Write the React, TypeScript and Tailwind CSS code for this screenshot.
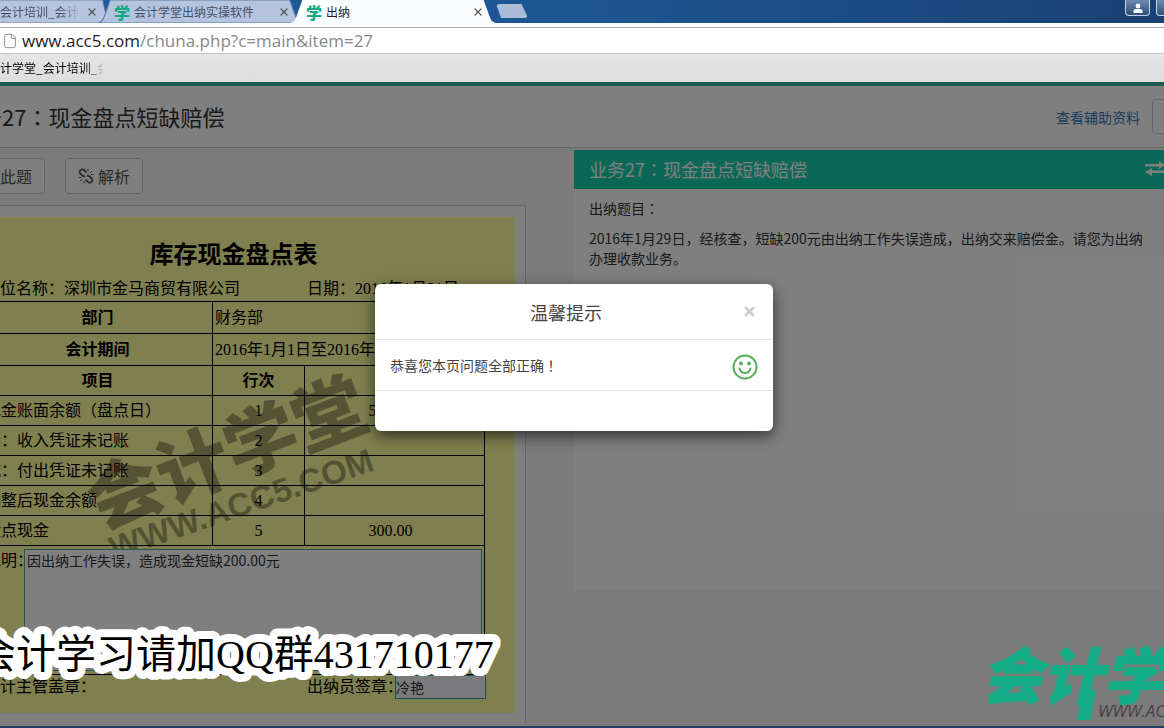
import { useState } from "react";
import { clsx } from "clsx";
import { X, File } from "lucide-react";

const tabs = [
  { id: "train", title: "会计培训_会计培", favicon: false, width: "w-[122px] -ml-3", pad: "pl-3" },
  { id: "soft", title: "会计学堂出纳实操软件", favicon: true, width: "w-[204px] -ml-3", pad: "pl-4" },
  { id: "cashier", title: "出纳", favicon: true, width: "w-[206px] -ml-3", pad: "pl-4" },
];

const rows = [
  { label: "现金账面余额（盘点日）", line: "1", amount: "500.00" },
  { label: "加：收入凭证未记账", line: "2", amount: "" },
  { label: "减：付出凭证未记账", line: "3", amount: "" },
  { label: "调整后现金余额", line: "4", amount: "" },
  { label: "盘点现金", line: "5", amount: "300.00" },
];

// colons and exclamation marks sit in the middle of their box
function Centered({ text }: { text: string }) {
  return (
    <>
      {text.split(/([：！])/).map((part, i) =>
        i % 2 ? (
          <span key={i} className="font-['Noto_Sans_CJK_TC',sans-serif]">{part}</span>
        ) : (
          part
        )
      )}
    </>
  );
}

function TabStrip() {
  const [active, setActive] = useState("cashier");

  return (
    <div className="flex h-[23px] items-start justify-between bg-linear-to-r from-[#1f5c9c] via-[#1d5592] to-[#1a4174]">
      <div className="flex min-w-0 items-start">
        {tabs.map((tab) => (
          <div key={tab.id} className={clsx("relative flex h-[23px] shrink-0 items-center", tab.width, active === tab.id && "z-10")}>
            <svg className="absolute inset-0 h-full w-full" viewBox="0 0 200 23" preserveAspectRatio="none">
              <path
                d="M0 23C4 22 5 20 6 17L12 0H188L194 17C195 20 196 22 200 23Z"
                fill={active === tab.id ? "#fbfcfd" : "#b4c4df"}
                stroke={active === tab.id ? "none" : "#5c7aa6"}
              />
            </svg>
            <button
              className={clsx("relative flex min-w-0 flex-1 items-center gap-1 text-xs", tab.pad, active === tab.id ? "text-[#222]" : "text-[#44506a]")}
              onClick={() => setActive(tab.id)}
            >
              {tab.favicon && <span className="text-base leading-none font-black text-[#12a884]">学</span>}
              <span
                className={clsx(
                  "overflow-hidden whitespace-nowrap",
                  !tab.favicon && "w-20 [mask-image:linear-gradient(to_right,black_75%,transparent)]"
                )}
              >
                {tab.title}
              </span>
            </button>
            <button className="relative mr-3 shrink-0 text-[#555]" aria-label="关闭标签页">
              <X size={12} strokeWidth={2.5} />
            </button>
          </div>
        ))}
        <button
          className="mt-1 h-[14px] w-8 rounded-sm bg-[#a9bdd9] [clip-path:polygon(0_0,80%_0,100%_100%,16%_100%)]"
          aria-label="新标签页"
        ></button>
      </div>
      <div className="-mr-4 flex gap-1.5">
        <button
          className="flex h-4 w-[25px] items-center justify-center rounded-b border border-t-0 border-[#c5d3e6] bg-linear-to-b from-[#6f8bb0] to-[#2f4f7c]"
          aria-label="用户"
        >
          <svg width="10" height="10" viewBox="0 0 10 10" fill="white">
            <circle cx="5" cy="3" r="2.4" />
            <path d="M0.5 10V8C0.5 6.5 2 6 3.5 6H6.5C8 6 9.5 6.5 9.5 8V10Z" />
          </svg>
        </button>
        <button
          className="h-4 w-6 rounded-b border border-t-0 border-[#c5d3e6] bg-linear-to-b from-[#6f8bb0] to-[#2f4f7c]"
          aria-label="最小化"
        ></button>
      </div>
    </div>
  );
}

function BrokenLinkIcon() {
  return (
    <svg width="16" height="16" viewBox="0 0 16 16" fill="none" stroke="currentColor" strokeWidth="1.8">
      <path d="M8.5 4.5L6.2 2.2C5 1 3.600 1 2.500 2.100C1.400 3.200 1.400 4.600 2.600 5.800L4.800 8L7 8.500" />
      <path d="M7.500 11.500L9.800 13.800C11 15 12.400 15 13.500 13.900C14.600 12.800 14.600 11.400 13.400 10.200L11.200 8L9 7.500" />
      <path d="M10 0.800V3M14 3L12 5M15.500 6.500H13M2 13L4 11M0.500 9.500H3M6 15.200V13" strokeWidth="1" />
    </svg>
  );
}

function CountSheet() {
  const [note, setNote] = useState("因出纳工作失误，造成现金短缺200.00元");
  const [sign, setSign] = useState("冷艳");

  return (
    <div className="relative overflow-hidden bg-[#ffff9f] pb-3.5 font-['Liberation_Serif','Noto_Sans_CJK_SC',serif] text-base text-black">
      <h3 className="-ml-12 pt-5 text-center text-2xl leading-9 font-bold">库存现金盘点表</h3>
      <div className="-ml-4 mt-1 flex h-6 items-center">
        <span className="w-[323px]">单位名称：深圳市金马商贸有限公司</span>
        <span>日期：2016年1月31日</span>
      </div>
      <svg
        className="absolute top-36 left-20"
        width="320"
        height="210"
        viewBox="80 361 320 210"
        fill="black"
        fillOpacity="0.34"
      >
        <text x="-36" y="27" transform="translate(124 492) rotate(-21)" fontFamily="Noto Sans CJK SC" fontSize="73" fontWeight="900">
          会计学堂
        </text>
        <text transform="translate(114 560) rotate(-19)" fontFamily="Liberation Sans" fontSize="33" fontWeight="700">
          WWW.ACC5.COM
        </text>
      </svg>
      <table className="relative -ml-[18px] w-[503px] table-fixed border-collapse">
        <colgroup>
          <col className="w-[230px]" />
          <col className="w-[92px]" />
          <col />
        </colgroup>
        <tbody className="[&_td]:border [&_td]:border-black [&_td]:px-0.5 [&_td]:py-0 [&_th]:border [&_th]:border-black [&_th]:p-0">
          <tr className="h-8">
            <th>部门</th>
            <td colSpan={2}>财务部</td>
          </tr>
          <tr className="h-8">
            <th>会计期间</th>
            <td colSpan={2}>2016年1月1日至2016年1月31日</td>
          </tr>
          <tr className="h-[30px]">
            <th>项目</th>
            <th>行次</th>
            <th>金额</th>
          </tr>
          {rows.map((row) => (
            <tr key={row.line} className="h-[30px]">
              <td>{row.label}</td>
              <td className="text-center">{row.line}</td>
              <td><div className="mr-2 text-center">{row.amount}</div></td>
            </tr>
          ))}
          <tr>
            <td colSpan={3}>
              <div className="flex items-start py-[3px]">
                <label htmlFor="note" className="w-[39px] shrink-0 whitespace-nowrap">说明：</label>
                <textarea
                  id="note"
                  className="block h-[122px] flex-1 resize-none border border-[#4caf8a] bg-white px-0.5 py-0 font-['Noto_Sans_CJK_SC',sans-serif] text-sm text-[#333]"
                  value={note}
                  onChange={(e) => setNote(e.target.value)}
                />
              </div>
            </td>
          </tr>
        </tbody>
      </table>
      <div className="-ml-4 flex items-center">
        <span className="w-[323px]">会计主管盖章：</span>
        <label htmlFor="sign" className="w-[88px] whitespace-nowrap">出纳员签章：</label>
        <input
          id="sign"
          className="relative h-6 w-[91px] border border-[#2fa7a0] bg-[#f4f4fa] font-['Noto_Sans_CJK_SC',sans-serif] text-sm text-[#333]"
          value={sign}
          onChange={(e) => setSign(e.target.value)}
        />
      </div>
    </div>
  );
}

function TipModal({ onClose }: { onClose: () => void }) {
  return (
    <div className="absolute inset-0 z-20 flex items-start justify-center bg-black/50 pt-[202px] pr-4">
      <div role="dialog" aria-labelledby="tip-title" className="w-[398px] rounded-md bg-white text-[#444] shadow-[0_5px_15px_rgba(0,0,0,0.6)]">
        <div className="relative flex h-14 items-center justify-center border-b border-[#e5e5e5]">
          <h4 id="tip-title" className="pr-4 text-lg">温馨提示</h4>
          <button className="absolute right-4 text-[#ccc]" onClick={onClose} aria-label="关闭">
            <X size={15} strokeWidth={4} />
          </button>
        </div>
        <div className="flex h-[51px] items-center justify-between border-b border-[#e5e5e5] px-[15px] text-sm">
          <p><Centered text="恭喜您本页问题全部正确！" /></p>
          <svg className="mt-1" width="26" height="26" viewBox="0 0 26 26" fill="none" stroke="#55ae5a" strokeWidth="2">
            <circle cx="13" cy="13" r="11.5" />
            <circle cx="9" cy="9.500" r="1.900" fill="#55ae5a" stroke="none" />
            <circle cx="17" cy="9.500" r="1.900" fill="#55ae5a" stroke="none" />
            <path d="M7.500 14.500C8.300 17.500 10.500 19 13 19S17.700 17.500 18.500 14.500" strokeLinecap="round" />
          </svg>
        </div>
        <div className="h-10"></div>
      </div>
    </div>
  );
}

export default function App() {
  const [showTip, setShowTip] = useState(true);

  return (
    <div className="relative flex min-h-screen flex-col overflow-hidden font-['Noto_Sans_CJK_SC',sans-serif] text-[#333]">
      <TabStrip />
      <div className="h-[5px] border-b border-[#a9a9a9] bg-[#fbfcfd]"></div>
      <div className="flex h-[26px] items-center gap-1 border-b border-[#c4c4c4] bg-white pl-0.5">
        <File size={16} strokeWidth={1.25} className="text-[#777]" />
        <div className="font-['Open_Sans',sans-serif] text-[17px] leading-6 text-[#888]">
          <span className="text-[#222]">www.acc5.com</span>/chuna.php?c=main&amp;item=27
        </div>
      </div>
      <div className="flex h-7 items-center bg-linear-to-b from-[#e6e4e4] to-[#dedede]">
        <a href="#" className="-ml-3 w-[116px] overflow-hidden text-xs whitespace-nowrap text-black [mask-image:linear-gradient(to_right,black_85%,transparent)]">
          会计学堂_会计培训_会计
        </a>
      </div>

      <main className="relative flex flex-1 flex-col border-b-2 border-[#1f3d66] bg-[#f7f7f7]">
        <header className="flex h-[66px] shrink-0 items-center justify-between border-t-4 border-b border-t-[#3cb89c] border-b-[#c8c8c8] bg-white">
          <h1 className="-ml-[42px] text-[22px] whitespace-nowrap"><Centered text="业务27：现金盘点短缺赔偿" /></h1>
          <div className="-mr-8 flex items-center gap-3">
            <a href="#" className="text-sm text-[#337ab7]">查看辅助资料</a>
            <button className="h-[35px] w-11 rounded border border-[#ccc] bg-white" aria-label="更多"></button>
          </div>
        </header>

        <div className="flex flex-1">
          <section className="w-[574px] shrink-0">
            <div className="-ml-12 flex h-[57px] items-center gap-5 pb-0.5 text-base text-[#555]">
              <button className="h-9 w-[93px] rounded-sm border border-[#ccc] bg-white pr-3 text-right">重做此题</button>
              <button className="flex h-9 w-[78px] items-center justify-center gap-1 rounded-sm border border-[#ccc] bg-white">
                <BrokenLinkIcon />
                解析
              </button>
            </div>
            <div className="w-[526px] border-t border-r border-[#ccc] bg-white pt-[11px] pr-2.5 pb-2.5">
              <CountSheet />
            </div>
          </section>

          <section className="mt-0.5 h-[440px] min-w-0 flex-1 bg-white">
            <div className="flex h-[39px] items-center justify-between bg-[#16d0ac] pb-0.5 pl-[15px]">
              <h2 className="text-lg text-white"><Centered text="业务27：现金盘点短缺赔偿" /></h2>
              <svg className="-mr-0.5" width="21" height="15" viewBox="0 0 21 15" fill="white">
                <path d="M0 3H14V0L20 4L14 8V5.500H0Z" />
                <path d="M21 9.500H7V7L0 11L7 15V12H21Z" />
              </svg>
            </div>
            <div className="px-[15px] pt-[9px] text-sm">
              <p className="mb-2.5"><Centered text="出纳题目：" /></p>
              <p>
                2016年1月29日，经核查，短缺200元由出纳工作失误造成，出纳交来赔偿金。请您为出纳办理收款业务。
              </p>
            </div>
          </section>
        </div>

        {showTip && <TipModal onClose={() => setShowTip(false)} />}
      </main>

      {/* scrolling caption and channel logo sit over everything */}
      <svg className="pointer-events-none absolute bottom-8 left-0 z-30" width="520" height="80" viewBox="0 0 520 80">
        <text
          x="-24"
          y="52"
          fontFamily="Liberation Serif, Noto Sans CJK SC, serif"
          fontSize="40"
          stroke="white"
          strokeWidth="16"
          strokeLinejoin="round"
          paintOrder="stroke"
        >
          会计学习请加QQ群431710177
        </text>
      </svg>
      <svg className="pointer-events-none absolute right-0 bottom-0.5 z-30" width="184" height="84" viewBox="0 0 184 84">
        <text x="1" y="57" fontFamily="Noto Sans CJK SC" fontSize="61" fontWeight="900" fontStyle="italic" fill="#14ac86" stroke="#14ac86" strokeWidth="1">
          会计学堂
        </text>
        <path d="M103 48H116L110 78H97Z" fill="#14ac86" />
        <text x="118" y="75" fontFamily="Open Sans" fontSize="17" fontStyle="italic" fill="#4a4040">
          WWW.ACC5.COM
        </text>
      </svg>
    </div>
  );
}
